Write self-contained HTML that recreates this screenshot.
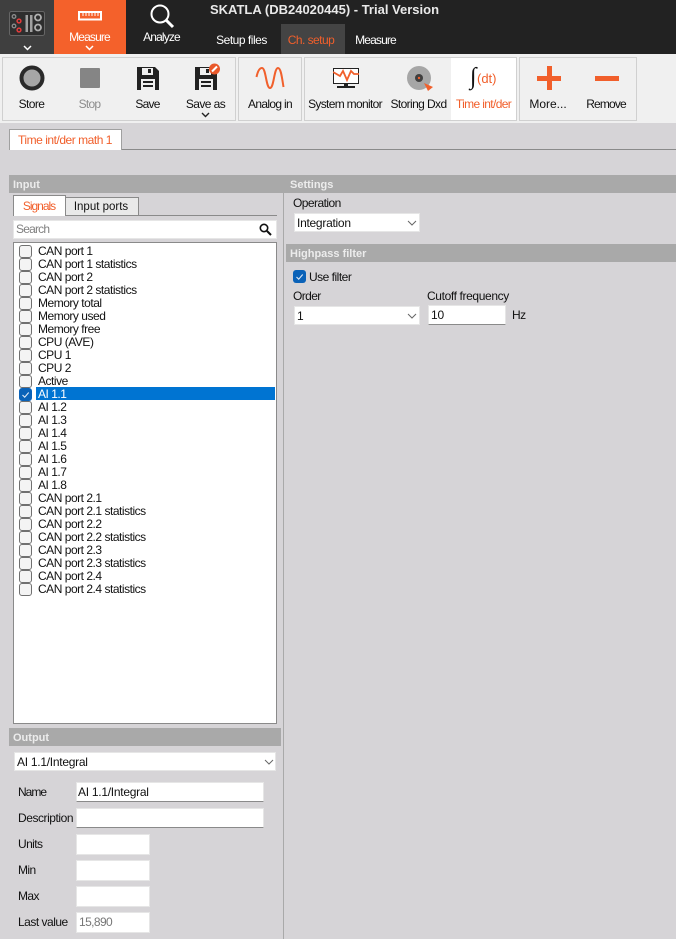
<!DOCTYPE html>
<html><head><meta charset="utf-8"><style>
html,body{margin:0;padding:0}
body{width:676px;height:939px;position:relative;overflow:hidden;background:#d6d4d7;font-family:"Liberation Sans",sans-serif;font-size:12px;color:#111}
div,span,svg{position:absolute}
.t{white-space:nowrap;line-height:14px}
.c{white-space:nowrap;line-height:14px;text-align:center}
.g{border:1px solid #d0d0d0;background:#f0f0f0;box-sizing:border-box}
.h{background:#a9a9a9;color:#ececec;font-weight:bold;font-size:11px;line-height:20px;height:18px;box-sizing:border-box;padding-left:4px}
.in{background:#fff;box-sizing:border-box;border:1px solid #e6e6e6}
.ul{border-bottom:1px solid #8a8a8a}
.cb{left:19px;width:13px;height:13px;box-sizing:border-box;border:1px solid #707070;border-radius:3px;background:#f4f4f4}
.r{left:38px;white-space:nowrap;line-height:13px;height:13px;letter-spacing:-.48px}
.o{color:#f15f2b}
</style></head><body>
<div style="left:0;top:0;width:676px;height:54px;background:#222"></div>
<div style="left:0;top:0;width:54px;height:54px;background:#3f3f3f"></div>
<div style="left:54px;top:0;width:72px;height:54px;background:#f4612b"></div>
<div style="left:281px;top:24px;width:64px;height:30px;background:#444"></div>

<svg style="left:9px;top:11px" width="36" height="25" viewBox="0 0 36 25">
<rect x=".5" y=".5" width="35" height="24" rx="2" fill="#2e2e2e" stroke="#666"/>
<circle cx="5" cy="5.5" r="1.8" fill="none" stroke="#8a8a8a" stroke-width="1.3"/><circle cx="5" cy="15" r="1.8" fill="none" stroke="#8a8a8a" stroke-width="1.3"/>
<circle cx="10" cy="10" r="1.9" fill="none" stroke="#e23b3b" stroke-width="1.5"/><circle cx="10" cy="19" r="1.9" fill="none" stroke="#e23b3b" stroke-width="1.5"/>
<rect x="16.5" y="4" width="2.5" height="17" fill="#a0a0a0"/><rect x="21" y="4" width="2.5" height="17" fill="#a0a0a0"/>
<circle cx="29" cy="6.5" r="3" fill="none" stroke="#b0b0b0" stroke-width="1.8"/><circle cx="29" cy="16.5" r="3" fill="none" stroke="#b0b0b0" stroke-width="1.8"/>
</svg>
<svg style="left:23px;top:45px" width="9" height="6"><path d="M1 1l3.5 3.5L8 1" fill="none" stroke="#fff" stroke-width="1.5"/></svg>

<svg style="left:78px;top:11px" width="24" height="10" viewBox="0 0 24 10"><rect x="1" y="1" width="22" height="7.5" fill="none" stroke="#fff" stroke-width="2"/><path d="M5 2v3M8 2v3M11 2v3M14 2v3M17 2v3M20 2v3" stroke="#fff"/></svg>
<div class="c" style="left:54px;top:30px;width:71px;color:#fff;letter-spacing:-.85px">Measure</div>
<svg style="left:85px;top:45px" width="9" height="6"><path d="M1 1l3.5 3.5L8 1" fill="none" stroke="#fff" stroke-width="1.5"/></svg>

<svg style="left:149px;top:3px" width="26" height="26" viewBox="0 0 26 26"><circle cx="11" cy="11" r="8.5" fill="none" stroke="#fff" stroke-width="2"/><path d="M17 17l7 7" stroke="#fff" stroke-width="3"/></svg>
<div class="c" style="left:126px;top:30px;width:71px;color:#fff;letter-spacing:-.85px">Analyze</div>

<div class="t" style="left:210px;top:3px;color:#e9e9e9;font-weight:bold;font-size:13px">SKATLA (DB24020445) - Trial Version</div>
<div class="c" style="left:208px;top:33px;width:67px;color:#fff;letter-spacing:-.48px">Setup files</div>
<div class="c o" style="left:279px;top:33px;width:64px;letter-spacing:-.55px">Ch. setup</div>
<div class="c" style="left:345px;top:33px;width:61px;color:#fff;letter-spacing:-.85px">Measure</div>

<div style="left:0;top:54px;width:676px;height:69px;background:#f0f0f0"></div>
<div class="g" style="left:2px;top:57px;width:234px;height:64px"></div>
<div class="g" style="left:238px;top:57px;width:64px;height:64px"></div>
<div class="g" style="left:304px;top:57px;width:213px;height:64px"></div>
<div style="left:451px;top:58px;width:65px;height:62px;background:#fff"></div>
<div class="g" style="left:519px;top:57px;width:118px;height:64px"></div>

<svg style="left:19px;top:65px" width="26" height="26"><circle cx="13" cy="13" r="10.5" fill="#a6a6a6" stroke="#2a2a2a" stroke-width="4"/></svg>
<div class="c" style="left:2px;top:97px;width:59px;letter-spacing:-.6px">Store</div>
<div style="left:80px;top:68px;width:20px;height:20px;background:#858585;border-radius:1px"></div>
<div class="c" style="left:60px;top:97px;width:59px;color:#8c8c8c;letter-spacing:-.75px">Stop</div>

<svg style="left:137px;top:67px" width="22" height="23" viewBox="0 0 22 23"><path d="M0 0h18l4 4v19H0z" fill="#222"/><rect x="5" y="1" width="11" height="7" fill="#f0f0f0"/><rect x="11" y="2" width="3" height="4" fill="#222"/><rect x="4" y="12" width="14" height="11" fill="#f0f0f0"/><rect x="6" y="14" width="10" height="2" fill="#222"/><rect x="6" y="18" width="10" height="2" fill="#222"/></svg>
<div class="c" style="left:118px;top:97px;width:59px;letter-spacing:-.75px">Save</div>

<svg style="left:195px;top:63px" width="26" height="27" viewBox="0 0 26 27"><path d="M0 4h18l4 4v19H0z" fill="#222"/><rect x="5" y="5" width="11" height="7" fill="#f0f0f0"/><rect x="11" y="6" width="3" height="4" fill="#222"/><rect x="4" y="16" width="14" height="11" fill="#f0f0f0"/><rect x="6" y="18" width="10" height="2" fill="#222"/><rect x="6" y="22" width="10" height="2" fill="#222"/><circle cx="19.5" cy="6" r="5.5" fill="#e9582a"/><path d="M17 8.5l5-5" stroke="#fff" stroke-width="2"/></svg>
<div class="c" style="left:176px;top:97px;width:59px;letter-spacing:-.57px">Save as</div>
<svg style="left:201px;top:112px" width="9" height="6"><path d="M1 1l3.5 3.5L8 1" fill="none" stroke="#222" stroke-width="1.4"/></svg>

<svg style="left:255px;top:66px" width="30" height="25" viewBox="0 0 30 25"><path d="M1.5 11C3 4 5 2 7 2c4 0 4 20 8 20s4-20 8-20c3 0 4 10 5.5 19" fill="none" stroke="#f1602c" stroke-width="2"/></svg>
<div class="c" style="left:240px;top:97px;width:60px;letter-spacing:-.67px">Analog in</div>

<svg style="left:333px;top:68px" width="26" height="21" viewBox="0 0 26 21"><rect x=".5" y=".5" width="25" height="15" fill="#fff" stroke="#222"/><path d="M0 4l7 4 3-5 4 9 4-9 3 3h5" fill="none" stroke="#f1602c" stroke-width="1.8"/><rect x="11" y="16" width="4" height="2" fill="#222"/><rect x="4" y="18" width="18" height="2" fill="#222"/></svg>
<div class="c" style="left:305px;top:97px;width:80px;letter-spacing:-.68px">System monitor</div>

<svg style="left:406px;top:65px" width="28" height="28" viewBox="0 0 28 28"><circle cx="13" cy="13" r="12" fill="#a6a6a6"/><circle cx="13" cy="13" r="4" fill="#3f3f3f"/><circle cx="13" cy="13" r="1.2" fill="#f1602c"/><path d="M18 18l9 4-5 4z" fill="#f1602c"/></svg>
<div class="c" style="left:387px;top:97px;width:63px;letter-spacing:-.6px">Storing Dxd</div>

<div class="t" style="left:470px;top:64px;font-size:24px;line-height:26px;font-family:'Liberation Serif',serif">∫</div>
<div class="t o" style="left:477px;top:71px;font-size:13px;line-height:16px">(dt)</div>
<div class="c o" style="left:451px;top:97px;width:65px;letter-spacing:-.63px">Time int/der</div>

<div style="left:537px;top:76px;width:24px;height:5px;background:#f15f2b"></div>
<div style="left:547px;top:66px;width:5px;height:24px;background:#f15f2b"></div>
<div class="c" style="left:519px;top:97px;width:58px">More...</div>
<div style="left:595px;top:76px;width:24px;height:5px;background:#f15f2b"></div>
<div class="c" style="left:577px;top:97px;width:58px;letter-spacing:-.85px">Remove</div>

<div style="left:9px;top:149px;width:667px;height:1px;background:#8a8a8a"></div>
<div style="left:9px;top:129px;width:113px;height:21px;box-sizing:border-box;background:#fff;border:1px solid #a0a0a0;border-bottom:0"></div>
<div class="c o" style="left:9px;top:133px;width:112px;letter-spacing:-.47px">Time int/der math 1</div>

<div class="h" style="left:9px;top:175px;width:667px">Input</div>
<div class="t" style="left:290px;top:178px;color:#ececec;font-weight:bold;font-size:11px;line-height:14px">Settings</div>
<div style="left:283px;top:193px;width:1px;height:746px;background:#a9a9a9"></div>

<div style="left:13px;top:215px;width:264px;height:1px;background:#8a8a8a"></div>
<div style="left:65px;top:197px;width:74px;height:18px;box-sizing:border-box;background:#e9e9e9;border:1px solid #8a8a8a;border-bottom:0"></div>
<div style="left:13px;top:195px;width:53px;height:21px;box-sizing:border-box;background:#fff;border:1px solid #8a8a8a;border-bottom:0"></div>
<div class="c o" style="left:13px;top:199px;width:52px;letter-spacing:-1px">Signals</div>
<div class="c" style="left:64px;top:200px;width:74px;font-size:11.5px">Input ports</div>

<div class="in" style="left:13px;top:220px;width:264px;height:19px"></div>
<div class="t" style="left:16px;top:222px;color:#808080;letter-spacing:-.8px">Search</div>
<svg style="left:259px;top:223px" width="13" height="13" viewBox="0 0 13 13"><circle cx="5" cy="5" r="3.7" fill="none" stroke="#111" stroke-width="1.6"/><path d="M8 8l4 4" stroke="#111" stroke-width="2"/></svg>

<div style="left:13px;top:242px;width:264px;height:482px;box-sizing:border-box;background:#fff;border:1px solid #8a8a8a"></div>
<div style="left:36px;top:387px;width:239px;height:13px;background:#0074d2"></div>

<div class="cb" style="top:245px"></div><div class="r" style="top:245px">CAN port 1</div>
<div class="cb" style="top:258px"></div><div class="r" style="top:258px">CAN port 1 statistics</div>
<div class="cb" style="top:271px"></div><div class="r" style="top:271px">CAN port 2</div>
<div class="cb" style="top:284px"></div><div class="r" style="top:284px">CAN port 2 statistics</div>
<div class="cb" style="top:297px"></div><div class="r" style="top:297px">Memory total</div>
<div class="cb" style="top:310px"></div><div class="r" style="top:310px">Memory used</div>
<div class="cb" style="top:323px"></div><div class="r" style="top:323px">Memory free</div>
<div class="cb" style="top:336px"></div><div class="r" style="top:336px">CPU (AVE)</div>
<div class="cb" style="top:349px"></div><div class="r" style="top:349px">CPU 1</div>
<div class="cb" style="top:362px"></div><div class="r" style="top:362px">CPU 2</div>
<div class="cb" style="top:375px"></div><div class="r" style="top:375px">Active</div>
<div class="cb" style="top:388px;background:#0a62b8;border-color:#0a62b8"></div>
<svg style="left:19px;top:388px" width="13" height="13"><path d="M3.5 7l2.2 2.2 4-4.7" fill="none" stroke="#dfe9f5" stroke-width="1.1"/></svg>
<div class="r" style="top:388px;color:#fff">AI 1.1</div>
<div class="cb" style="top:401px"></div><div class="r" style="top:401px">AI 1.2</div>
<div class="cb" style="top:414px"></div><div class="r" style="top:414px">AI 1.3</div>
<div class="cb" style="top:427px"></div><div class="r" style="top:427px">AI 1.4</div>
<div class="cb" style="top:440px"></div><div class="r" style="top:440px">AI 1.5</div>
<div class="cb" style="top:453px"></div><div class="r" style="top:453px">AI 1.6</div>
<div class="cb" style="top:466px"></div><div class="r" style="top:466px">AI 1.7</div>
<div class="cb" style="top:479px"></div><div class="r" style="top:479px">AI 1.8</div>
<div class="cb" style="top:492px"></div><div class="r" style="top:492px">CAN port 2.1</div>
<div class="cb" style="top:505px"></div><div class="r" style="top:505px">CAN port 2.1 statistics</div>
<div class="cb" style="top:518px"></div><div class="r" style="top:518px">CAN port 2.2</div>
<div class="cb" style="top:531px"></div><div class="r" style="top:531px">CAN port 2.2 statistics</div>
<div class="cb" style="top:544px"></div><div class="r" style="top:544px">CAN port 2.3</div>
<div class="cb" style="top:557px"></div><div class="r" style="top:557px">CAN port 2.3 statistics</div>
<div class="cb" style="top:570px"></div><div class="r" style="top:570px">CAN port 2.4</div>
<div class="cb" style="top:583px"></div><div class="r" style="top:583px">CAN port 2.4 statistics</div>

<div class="h" style="left:9px;top:728px;width:272px">Output</div>
<div class="in" style="left:14px;top:752px;width:262px;height:19px"></div>
<div class="t" style="left:17px;top:755px;letter-spacing:-.27px">AI 1.1/Integral</div>
<svg style="left:264px;top:759px" width="10" height="6"><path d="M1 1l4 4 4-4" fill="none" stroke="#666"/></svg>

<div class="t" style="left:18px;top:785px;letter-spacing:-1px">Name</div>
<div class="in ul" style="left:76px;top:782px;width:188px;height:20px"></div>
<div class="t" style="left:78px;top:785px;letter-spacing:-.27px">AI 1.1/Integral</div>
<div class="t" style="left:18px;top:811px;letter-spacing:-.45px">Description</div>
<div class="in ul" style="left:76px;top:808px;width:188px;height:20px"></div>
<div class="t" style="left:18px;top:837px;letter-spacing:-.6px">Units</div>
<div class="in" style="left:76px;top:834px;width:74px;height:21px"></div>
<div class="t" style="left:18px;top:863px;letter-spacing:-.6px">Min</div>
<div class="in" style="left:76px;top:860px;width:74px;height:21px"></div>
<div class="t" style="left:18px;top:889px;letter-spacing:-.6px">Max</div>
<div class="in" style="left:76px;top:886px;width:74px;height:21px"></div>
<div class="t" style="left:18px;top:915px;letter-spacing:-.5px">Last value</div>
<div class="in" style="left:76px;top:912px;width:74px;height:21px"></div>
<div class="t" style="left:79px;top:915px;color:#777;letter-spacing:-.6px">15,890</div>

<div class="t" style="left:293px;top:196px;letter-spacing:-.55px">Operation</div>
<div class="in" style="left:294px;top:213px;width:126px;height:19px"></div>
<div class="t" style="left:297px;top:216px;letter-spacing:-.27px">Integration</div>
<svg style="left:407px;top:220px" width="10" height="6"><path d="M1 1l4 4 4-4" fill="none" stroke="#666"/></svg>

<div class="h" style="left:286px;top:244px;width:390px">Highpass filter</div>
<div style="left:293px;top:270px;width:13px;height:13px;background:#0a62b8;border-radius:3px"></div>
<svg style="left:293px;top:270px" width="13" height="13"><path d="M3.5 7l2.2 2.2 4-4.7" fill="none" stroke="#dfe9f5" stroke-width="1.1"/></svg>
<div class="t" style="left:309px;top:270px;letter-spacing:-.5px">Use filter</div>
<div class="t" style="left:293px;top:289px;letter-spacing:-.6px">Order</div>
<div class="t" style="left:427px;top:289px;letter-spacing:-.37px">Cutoff frequency</div>
<div class="in" style="left:294px;top:306px;width:126px;height:19px"></div>
<div class="t" style="left:297px;top:309px">1</div>
<svg style="left:407px;top:313px" width="10" height="6"><path d="M1 1l4 4 4-4" fill="none" stroke="#666"/></svg>
<div class="in ul" style="left:428px;top:305px;width:78px;height:20px"></div>
<div class="t" style="left:431px;top:308px;letter-spacing:-.2px">10</div>
<div class="t" style="left:512px;top:308px;letter-spacing:-.5px">Hz</div>
</body></html>
